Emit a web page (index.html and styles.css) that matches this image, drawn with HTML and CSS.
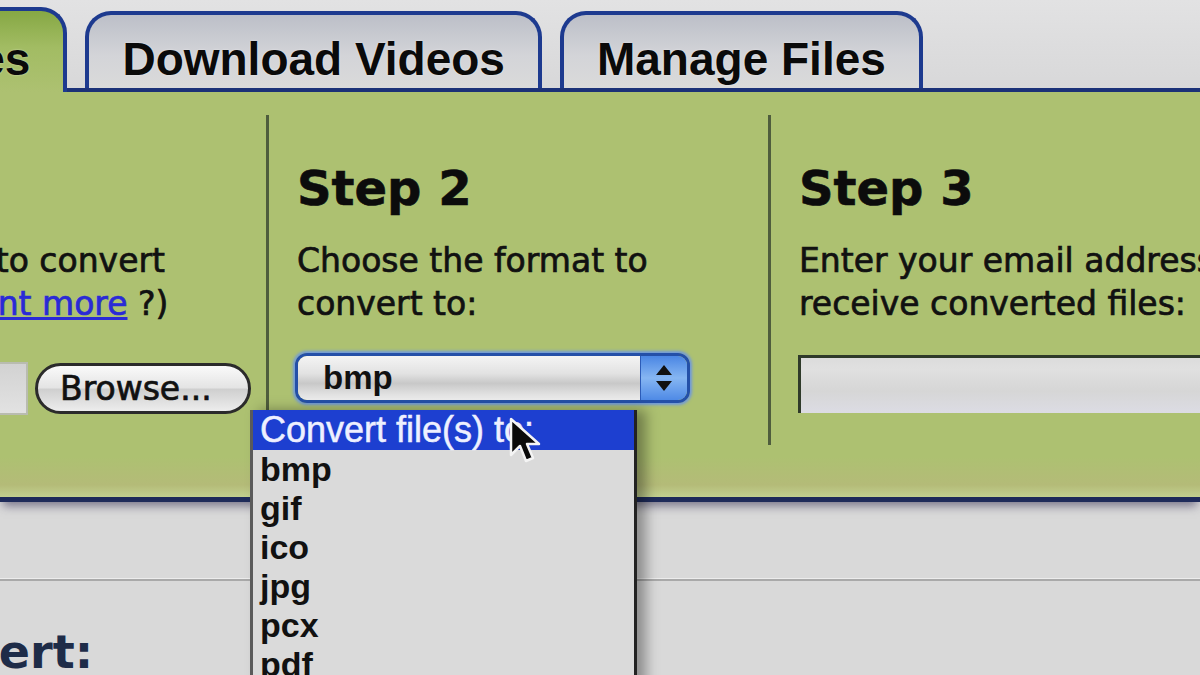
FILE: index.html
```html
<!DOCTYPE html>
<html lang="en">
<head>
	<meta charset="UTF-8">
	<title>Convert Files</title>
	<link rel="stylesheet" href="styles.css">
</head>
<body>
	<div class="tabs">
		<div class="tab active">Convert Files</div>
		<div class="tab">Download Videos</div>
		<div class="tab">Manage Files</div>
	</div>
	<div class="panel">
		<div class="step step1">
			<h2>Step 1</h2>
			<p>Select a file to convert<br>(100 MB, <a href="#">want more</a> ?)</p>
			<div class="file_row">
				<input class="file_name" type="text">
				<button class="browse">Browse...</button>
			</div>
		</div>
		<div class="step step2">
			<h2>Step 2</h2>
			<p>Choose the format to<br>convert to:</p>
			<div class="select_wrap">
				<div class="select">
					<span class="value">bmp</span>
					<span class="arrows">
						<svg width="20" height="30" viewBox="0 0 20 30"><path d="M10 2 L18 12 L2 12 Z M10 28 L18 18 L2 18 Z" fill="#111"/></svg>
					</span>
				</div>
				<ul class="drop">
					<li class="head">Convert file(s) to:</li>
					<li>bmp</li>
					<li>gif</li>
					<li>ico</li>
					<li>jpg</li>
					<li>pcx</li>
					<li>pdf</li>
					<li>png</li>
				</ul>
				<svg class="cursor" width="36" height="48" viewBox="0 0 36 48"><path d="M3 3 L3 39 L12 30 L18 45 L25 42 L19 28 L31 28 Z" fill="#0a0a0a" stroke="#f4f4f4" stroke-width="2.5" stroke-linejoin="round"/></svg>
			</div>
		</div>
		<div class="step step3">
			<h2>Step 3</h2>
			<p>Enter your email address to<br>receive converted files:</p>
			<input class="email" type="text">
		</div>
	</div>
	<div class="below">
		<div class="rule"></div>
		<h3>Files to convert:</h3>
	</div>
</body>
</html>
```

FILE: styles.css
```css
html, body {
	margin: 0;
	padding: 0;
}
body {
	width: 1200px;
	height: 675px;
	overflow: hidden;
	background-color: #d9d9d9;
	font-family: "DejaVu Sans", Verdana, sans-serif;
	color: #111;
}

/* tabs */
.tabs {
	display: flex;
	align-items: flex-end;
	gap: 18px;
	height: 88px;
	margin-left: -298px;
	border-bottom: 4px solid #1c3278;
	background: linear-gradient(#e2e2e3, #d8d8d9);
}
.tab {
	padding: 21px 33px 6px;
	border: 4px solid #1d3a8f;
	border-bottom: 0;
	border-radius: 26px 26px 0 0;
	background: linear-gradient(#bcbfc8, #d3d4d8 55%, #dadada);
	font: bold 46px/46px "Liberation Sans", Arial, sans-serif;
	color: #0a0a0a;
	white-space: nowrap;
	text-shadow: 0 0 2px rgba(255, 255, 255, 0.6);
}
.tab.active {
	padding-top: 25px;
	padding-bottom: 10px;
	margin-bottom: -4px;
	background: linear-gradient(#86a844, #a2bc63 45%, #adc171);
}

/* green panel */
.panel {
	display: flex;
	padding: 23px 0 52px;
	background: linear-gradient(#adc171, #adc171 90%, #b4bb78 97%, #c2d08f);
	border-bottom: 5px solid #1e2b5a;
	box-shadow: 0 7px 9px -3px rgba(60, 55, 90, 0.6);
}
.step {
	flex-shrink: 0;
	box-sizing: border-box;
	width: 502px;
	height: 330px;
	padding: 0 28px;
	border-left: 3px solid #4f5d3d;
	white-space: nowrap;
}
.step1 {
	margin-left: -236px;
	border-left: 0;
}
.step3 {
	flex: 1;
}
.step h2 {
	margin: 45px 0 0;
	font: bold 48px/56px "DejaVu Sans", Verdana, sans-serif;
	color: #0c0c0c;
	-webkit-text-stroke: 0.6px #0c0c0c;
}
.step p {
	margin: 23px 0 0;
	font-size: 33px;
	line-height: 43px;
	-webkit-text-stroke: 0.7px #111;
}
.step p a {
	color: #2a2ad6;
	-webkit-text-stroke: 0.7px #2a2ad6;
	text-decoration: underline;
}

/* step 1 */
.file_row {
	display: flex;
	align-items: center;
	gap: 7px;
	margin-top: 37px;
}
.file_name {
	flex-shrink: 0;
	box-sizing: border-box;
	width: 236px;
	height: 53px;
	margin: 0;
	border: 2px solid #b9bcb0;
	background: linear-gradient(#d2d2d2, #e2e2e2);
}
.browse {
	flex-shrink: 0;
	box-sizing: border-box;
	width: 216px;
	height: 51px;
	margin: 0;
	padding: 0 0 0 22px;
	text-align: left;
	border: 3px solid #2b2b2b;
	border-radius: 26px;
	background: linear-gradient(#fafafa, #e4e4e4 48%, #cfcfcf 52%, #ededed);
	font: 33px/44px "DejaVu Sans", Verdana, sans-serif;
	color: #111;
	-webkit-text-stroke: 0.7px #111;
}

/* step 2 */
.select_wrap {
	position: relative;
	width: 395px;
	margin: 28px 0 0 -2px;
}
.select {
	display: flex;
	height: 44px;
	border: 3px solid #2450a8;
	border-radius: 12px;
	box-shadow: 0 0 3px 2px #6e98e0;
	overflow: hidden;
}
.select .value {
	flex: 1;
	padding-left: 25px;
	background: linear-gradient(#f4f4f4, #e2e2e2 40%, #c8c8c8 62%, #eeeeee);
	font: bold 33px/44px "Liberation Sans", Arial, sans-serif;
	color: #111;
}
.select .arrows {
	display: flex;
	align-items: center;
	justify-content: center;
	width: 46px;
	border-left: 1px solid #2c5cb8;
	background: linear-gradient(#4a86e4, #86b6f2 50%, #4f8ae6);
}
.drop {
	position: absolute;
	left: -45px;
	top: 57px;
	width: 381px;
	margin: 0;
	padding: 0;
	list-style: none;
	background-color: #dadada;
	border-left: 3px solid #5a5a5a;
	border-right: 3px solid #222;
	box-shadow: 9px 0 12px rgba(0, 0, 0, 0.35);
}
.drop li {
	padding-left: 7px;
	font: bold 34px/39px "Liberation Sans", Arial, sans-serif;
	color: #111;
}
.drop li.head {
	background-color: #1d3fd0;
	color: #eef0ff;
	font: 36px/40px "Liberation Sans", Arial, sans-serif;
	-webkit-text-stroke: 0.5px #eef0ff;
}
.cursor {
	position: absolute;
	left: 213px;
	top: 63px;
}

/* step 3 */
.email {
	box-sizing: border-box;
	width: 460px;
	height: 58px;
	margin: 30px 0 0 -1px;
	border: 0;
	border-top: 3px solid #2f3a2a;
	border-left: 3px solid #2f3a2a;
	background: linear-gradient(#dcdcdc, #e0e0e0 20%, #d6d6d6 60%, #dcdce4);
}

/* below the panel */
.below {
	padding-top: 76px;
}
.rule {
	height: 2px;
	background-color: #a9a9a9;
	border-top: 1px solid #ececec;
}
.below h3 {
	margin: 43px 0 0 -330px;
	font: bold 46px/56px "DejaVu Sans", Verdana, sans-serif;
	color: #1e2c48;
	white-space: nowrap;
}
```
